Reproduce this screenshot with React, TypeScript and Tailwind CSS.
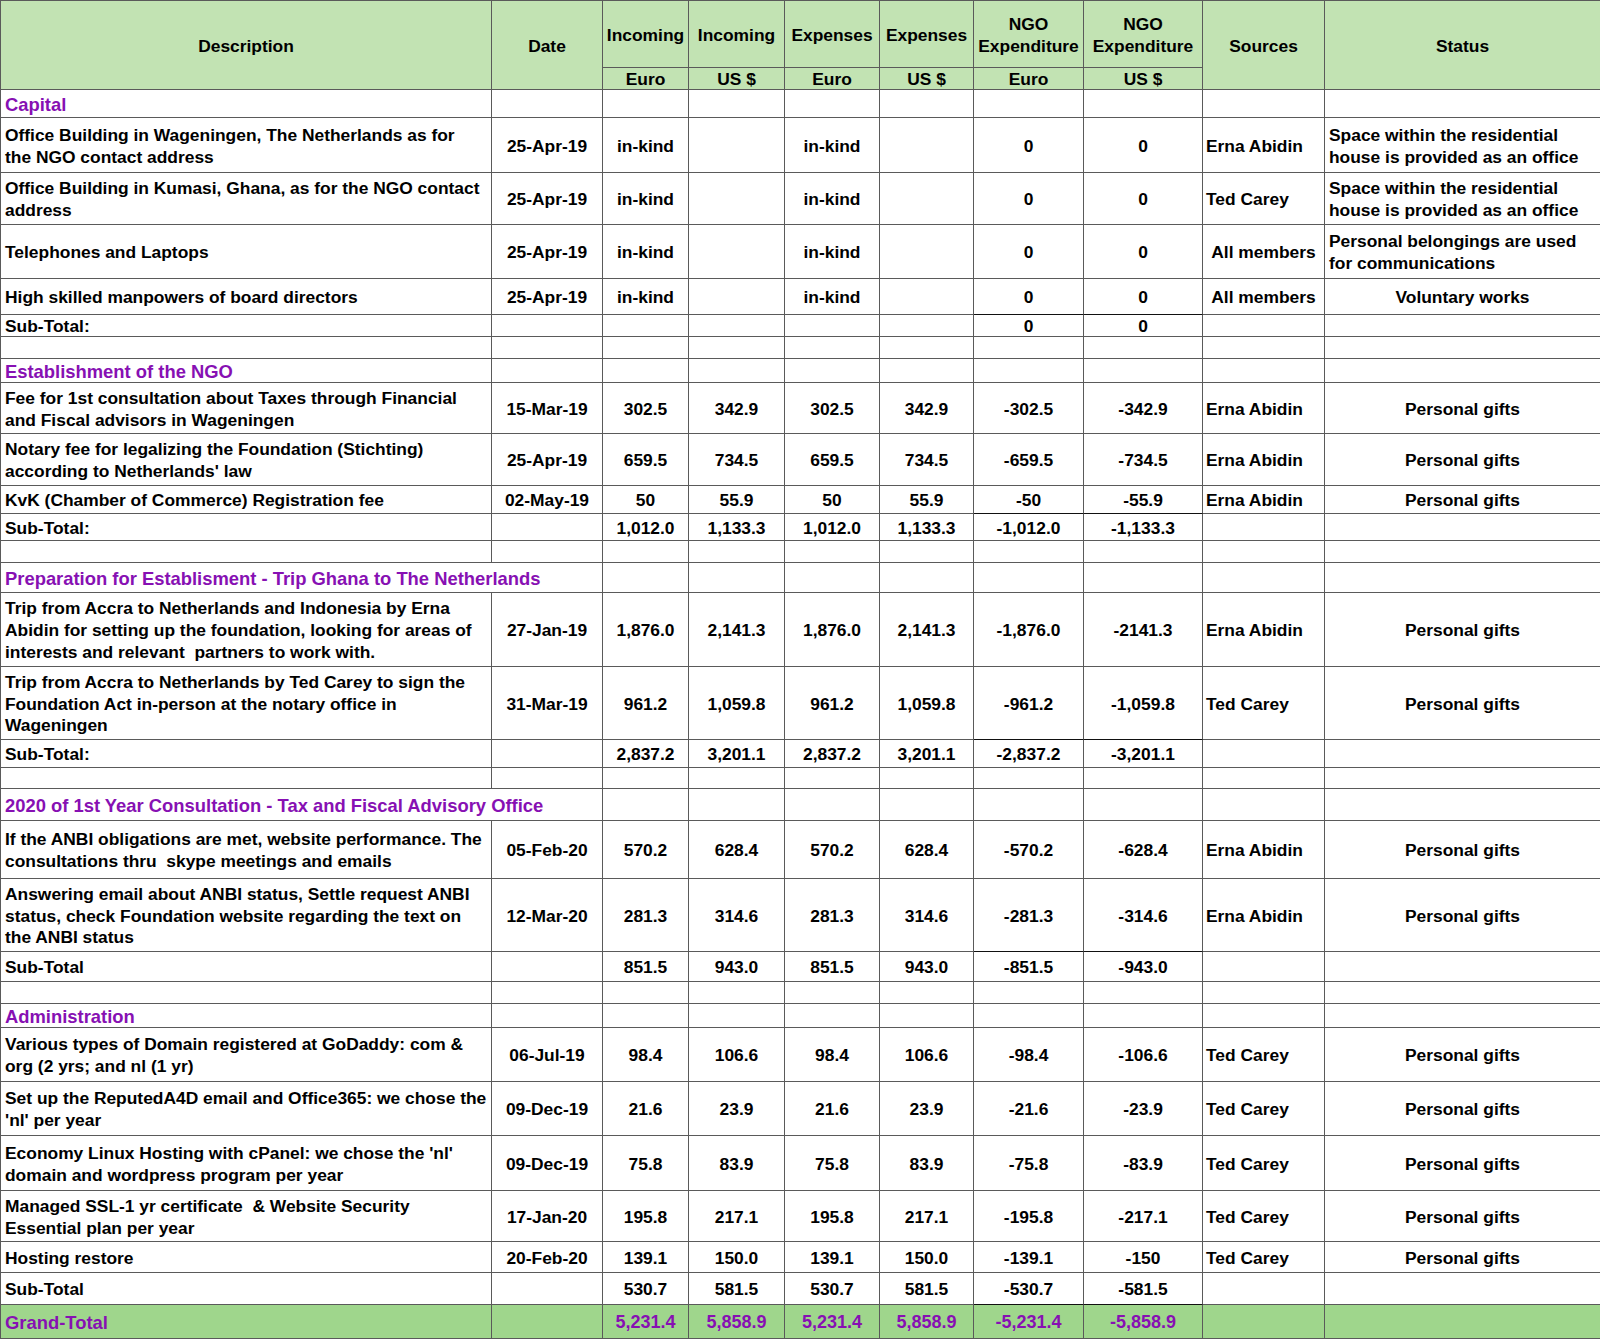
import React from "react";

const COLS =
  "grid grid-cols-[491px_111px_86px_96px_95px_94px_110px_119px_122px_276px]";
const CELL =
  "border-r border-b border-[#5a5a5a] flex items-center overflow-hidden whitespace-nowrap pt-[3px]";
const PURPLE = "text-[#8710b3]";

type Item = {
  kind: "item";
  h: string;
  desc: string[];
  date: string;
  vals: string[];
  src: string;
  srcCenter?: boolean;
  status: string[];
  statusCenter?: boolean;
  darkBottom?: boolean;
};
type Section = { kind: "section"; h: string; title: string; span?: boolean };
type Sub = {
  kind: "sub";
  h: string;
  label: string;
  vals: string[];
  darkBottom?: boolean;
};
type Empty = { kind: "empty"; h: string };
type Grand = { kind: "grand"; h: string; vals: string[] };
type Row = Item | Section | Sub | Empty | Grand;

const PG = ["Personal gifts"];

const rows: Row[] = [
  { kind: "section", h: "h-[28px]", title: "Capital" },
  {
    kind: "item",
    h: "h-[55px]",
    desc: ["Office Building in Wageningen, The Netherlands as for", "the NGO contact address"],
    date: "25-Apr-19",
    vals: ["in-kind", "", "in-kind", "", "0", "0"],
    src: "Erna Abidin",
    status: ["Space within the residential", "house is provided as an office"],
  },
  {
    kind: "item",
    h: "h-[52px]",
    desc: ["Office Building in Kumasi, Ghana, as for the NGO contact", "address"],
    date: "25-Apr-19",
    vals: ["in-kind", "", "in-kind", "", "0", "0"],
    src: "Ted Carey",
    status: ["Space within the residential", "house is provided as an office"],
  },
  {
    kind: "item",
    h: "h-[54px]",
    desc: ["Telephones and Laptops"],
    date: "25-Apr-19",
    vals: ["in-kind", "", "in-kind", "", "0", "0"],
    src: "All members",
    srcCenter: true,
    status: ["Personal belongings are used", "for communications"],
  },
  {
    kind: "item",
    h: "h-[36px]",
    desc: ["High skilled manpowers of board directors"],
    date: "25-Apr-19",
    vals: ["in-kind", "", "in-kind", "", "0", "0"],
    src: "All members",
    srcCenter: true,
    status: ["Voluntary works"],
    statusCenter: true,
    darkBottom: true,
  },
  { kind: "sub", h: "h-[22px]", label: "Sub-Total:", vals: ["", "", "", "", "0", "0"] },
  { kind: "empty", h: "h-[22px]" },
  { kind: "section", h: "h-[24px]", title: "Establishment of the NGO" },
  {
    kind: "item",
    h: "h-[51px]",
    desc: ["Fee for 1st consultation about Taxes through Financial", "and Fiscal advisors in Wageningen"],
    date: "15-Mar-19",
    vals: ["302.5", "342.9", "302.5", "342.9", "-302.5", "-342.9"],
    src: "Erna Abidin",
    status: PG,
    statusCenter: true,
  },
  {
    kind: "item",
    h: "h-[52px]",
    desc: ["Notary fee for legalizing the Foundation (Stichting)", "according to Netherlands' law"],
    date: "25-Apr-19",
    vals: ["659.5", "734.5", "659.5", "734.5", "-659.5", "-734.5"],
    src: "Erna Abidin",
    status: PG,
    statusCenter: true,
  },
  {
    kind: "item",
    h: "h-[28px]",
    desc: ["KvK (Chamber of Commerce) Registration fee"],
    date: "02-May-19",
    vals: ["50", "55.9", "50", "55.9", "-50", "-55.9"],
    src: "Erna Abidin",
    status: PG,
    statusCenter: true,
    darkBottom: true,
  },
  {
    kind: "sub",
    h: "h-[27px]",
    label: "Sub-Total:",
    vals: ["1,012.0", "1,133.3", "1,012.0", "1,133.3", "-1,012.0", "-1,133.3"],
  },
  { kind: "empty", h: "h-[22px]" },
  {
    kind: "section",
    h: "h-[30px]",
    title: "Preparation for Establisment - Trip Ghana to The Netherlands",
    span: true,
  },
  {
    kind: "item",
    h: "h-[74px]",
    desc: [
      "Trip from Accra to Netherlands and Indonesia by Erna",
      "Abidin for setting up the foundation, looking for areas of",
      "interests and relevant  partners to work with.",
    ],
    date: "27-Jan-19",
    vals: ["1,876.0", "2,141.3", "1,876.0", "2,141.3", "-1,876.0", "-2141.3"],
    src: "Erna Abidin",
    status: PG,
    statusCenter: true,
  },
  {
    kind: "item",
    h: "h-[73px]",
    desc: [
      "Trip from Accra to Netherlands by Ted Carey to sign the",
      "Foundation Act in-person at the notary office in",
      "Wageningen",
    ],
    date: "31-Mar-19",
    vals: ["961.2", "1,059.8", "961.2", "1,059.8", "-961.2", "-1,059.8"],
    src: "Ted Carey",
    status: PG,
    statusCenter: true,
    darkBottom: true,
  },
  {
    kind: "sub",
    h: "h-[28px]",
    label: "Sub-Total:",
    vals: ["2,837.2", "3,201.1", "2,837.2", "3,201.1", "-2,837.2", "-3,201.1"],
  },
  { kind: "empty", h: "h-[21px]" },
  {
    kind: "section",
    h: "h-[32px]",
    title: "2020 of 1st Year Consultation - Tax and Fiscal Advisory Office",
    span: true,
  },
  {
    kind: "item",
    h: "h-[58px]",
    desc: [
      "If the ANBI obligations are met, website performance. The",
      "consultations thru  skype meetings and emails",
    ],
    date: "05-Feb-20",
    vals: ["570.2", "628.4", "570.2", "628.4", "-570.2", "-628.4"],
    src: "Erna Abidin",
    status: PG,
    statusCenter: true,
  },
  {
    kind: "item",
    h: "h-[73px]",
    desc: [
      "Answering email about ANBI status, Settle request ANBI",
      "status, check Foundation website regarding the text on",
      "the ANBI status",
    ],
    date: "12-Mar-20",
    vals: ["281.3", "314.6", "281.3", "314.6", "-281.3", "-314.6"],
    src: "Erna Abidin",
    status: PG,
    statusCenter: true,
    darkBottom: true,
  },
  {
    kind: "sub",
    h: "h-[30px]",
    label: "Sub-Total",
    vals: ["851.5", "943.0", "851.5", "943.0", "-851.5", "-943.0"],
  },
  { kind: "empty", h: "h-[22px]" },
  { kind: "section", h: "h-[24px]", title: "Administration" },
  {
    kind: "item",
    h: "h-[54px]",
    desc: ["Various types of Domain registered at GoDaddy: com &", "org (2 yrs; and nl (1 yr)"],
    date: "06-Jul-19",
    vals: ["98.4", "106.6", "98.4", "106.6", "-98.4", "-106.6"],
    src: "Ted Carey",
    status: PG,
    statusCenter: true,
  },
  {
    kind: "item",
    h: "h-[54px]",
    desc: ["Set up the ReputedA4D email and Office365: we chose the", "'nl' per year"],
    date: "09-Dec-19",
    vals: ["21.6", "23.9", "21.6", "23.9", "-21.6", "-23.9"],
    src: "Ted Carey",
    status: PG,
    statusCenter: true,
  },
  {
    kind: "item",
    h: "h-[55px]",
    desc: ["Economy Linux Hosting with cPanel: we chose the 'nl'", "domain and wordpress program per year"],
    date: "09-Dec-19",
    vals: ["75.8", "83.9", "75.8", "83.9", "-75.8", "-83.9"],
    src: "Ted Carey",
    status: PG,
    statusCenter: true,
  },
  {
    kind: "item",
    h: "h-[51px]",
    desc: ["Managed SSL-1 yr certificate  & Website Security", "Essential plan per year"],
    date: "17-Jan-20",
    vals: ["195.8", "217.1", "195.8", "217.1", "-195.8", "-217.1"],
    src: "Ted Carey",
    status: PG,
    statusCenter: true,
  },
  {
    kind: "item",
    h: "h-[31px]",
    desc: ["Hosting restore"],
    date: "20-Feb-20",
    vals: ["139.1", "150.0", "139.1", "150.0", "-139.1", "-150"],
    src: "Ted Carey",
    status: PG,
    statusCenter: true,
  },
  {
    kind: "sub",
    h: "h-[32px]",
    label: "Sub-Total",
    vals: ["530.7", "581.5", "530.7", "581.5", "-530.7", "-581.5"],
    darkBottom: true,
  },
  {
    kind: "grand",
    h: "h-[34px]",
    vals: ["5,231.4", "5,858.9", "5,231.4", "5,858.9", "-5,231.4", "-5,858.9"],
  },
];

function Lines({ lines }: { lines: string[] }) {
  return (
    <span className="whitespace-pre">
      {lines.map((l, i) => (
        <React.Fragment key={i}>
          {i > 0 && <br />}
          {l}
        </React.Fragment>
      ))}
    </span>
  );
}

function ValCells({
  vals,
  darkBottom,
  extra = "",
}: {
  vals: string[];
  darkBottom?: boolean;
  extra?: string;
}) {
  return (
    <>
      {vals.map((v, i) => (
        <div
          key={i}
          className={`${CELL} justify-center ${extra} ${
            darkBottom && i >= 4 ? "border-b-[#111]" : ""
          }`}
        >
          {v}
        </div>
      ))}
    </>
  );
}

function RowView({ row }: { row: Row }) {
  if (row.kind === "section") {
    return (
      <div className={`${COLS} ${row.h}`}>
        {row.span ? (
          <div className={`${CELL} col-span-2 pl-[4px] text-[18.4px] ${PURPLE}`}>
            {row.title}
          </div>
        ) : (
          <>
            <div className={`${CELL} pl-[4px] text-[18.4px] ${PURPLE}`}>{row.title}</div>
            <div className={CELL} />
          </>
        )}
        {Array.from({ length: 8 }).map((_, i) => (
          <div key={i} className={CELL} />
        ))}
      </div>
    );
  }
  if (row.kind === "empty") {
    return (
      <div className={`${COLS} ${row.h}`}>
        {Array.from({ length: 10 }).map((_, i) => (
          <div key={i} className={CELL} />
        ))}
      </div>
    );
  }
  if (row.kind === "sub") {
    return (
      <div className={`${COLS} ${row.h}`}>
        <div className={`${CELL} pl-[4px]`}>{row.label}</div>
        <div className={CELL} />
        <ValCells vals={row.vals} darkBottom={row.darkBottom} />
        <div className={CELL} />
        <div className={CELL} />
      </div>
    );
  }
  if (row.kind === "grand") {
    const g = "bg-[#9fd68c]";
    return (
      <div className={`${COLS} ${row.h} ${g}`}>
        <div className={`${CELL} pl-[4px] text-[18.4px] ${PURPLE}`}>Grand-Total</div>
        <div className={CELL} />
        <ValCells vals={row.vals} extra={`text-[18px] ${PURPLE}`} />
        <div className={CELL} />
        <div className={CELL} />
      </div>
    );
  }
  return (
    <div className={`${COLS} ${row.h}`}>
      <div className={`${CELL} pl-[4px]`}>
        <Lines lines={row.desc} />
      </div>
      <div className={`${CELL} justify-center`}>{row.date}</div>
      <ValCells vals={row.vals} darkBottom={row.darkBottom} />
      <div className={`${CELL} ${row.srcCenter ? "justify-center" : "pl-[3px]"}`}>
        {row.src}
      </div>
      <div className={`${CELL} ${row.statusCenter ? "justify-center" : "pl-[4px]"}`}>
        <Lines lines={row.status} />
      </div>
    </div>
  );
}

function Header() {
  const hc =
    "border-r border-b border-[#5a5a5a] flex items-center justify-center text-center whitespace-nowrap pt-[3px]";
  return (
    <div className={`${COLS} grid-rows-[67px_22px] bg-[#c2e3b3]`}>
      <div className={`${hc} row-span-2`}>Description</div>
      <div className={`${hc} row-span-2`}>Date</div>
      <div className={hc}>Incoming</div>
      <div className={hc}>Incoming</div>
      <div className={hc}>Expenses</div>
      <div className={hc}>Expenses</div>
      <div className={hc}>
        <span>
          NGO
          <br />
          Expenditure
        </span>
      </div>
      <div className={hc}>
        <span>
          NGO
          <br />
          Expenditure
        </span>
      </div>
      <div className={`${hc} row-span-2`}>Sources</div>
      <div className={`${hc} row-span-2`}>Status</div>
      <div className={hc}>Euro</div>
      <div className={hc}>US $</div>
      <div className={hc}>Euro</div>
      <div className={hc}>US $</div>
      <div className={hc}>Euro</div>
      <div className={hc}>US $</div>
    </div>
  );
}

export default function App() {
  return (
    <div className="w-[1600px] h-[1339px] bg-white overflow-hidden">
      <div
        className="w-[1600px] border-t border-l border-[#5a5a5a] text-[17.4px] leading-[21.7px] font-bold text-black"
        style={{ fontFamily: '"Liberation Sans", Arial, Helvetica, sans-serif' }}
      >
        <Header />
        {rows.map((r, i) => (
          <RowView key={i} row={r} />
        ))}
      </div>
    </div>
  );
}
